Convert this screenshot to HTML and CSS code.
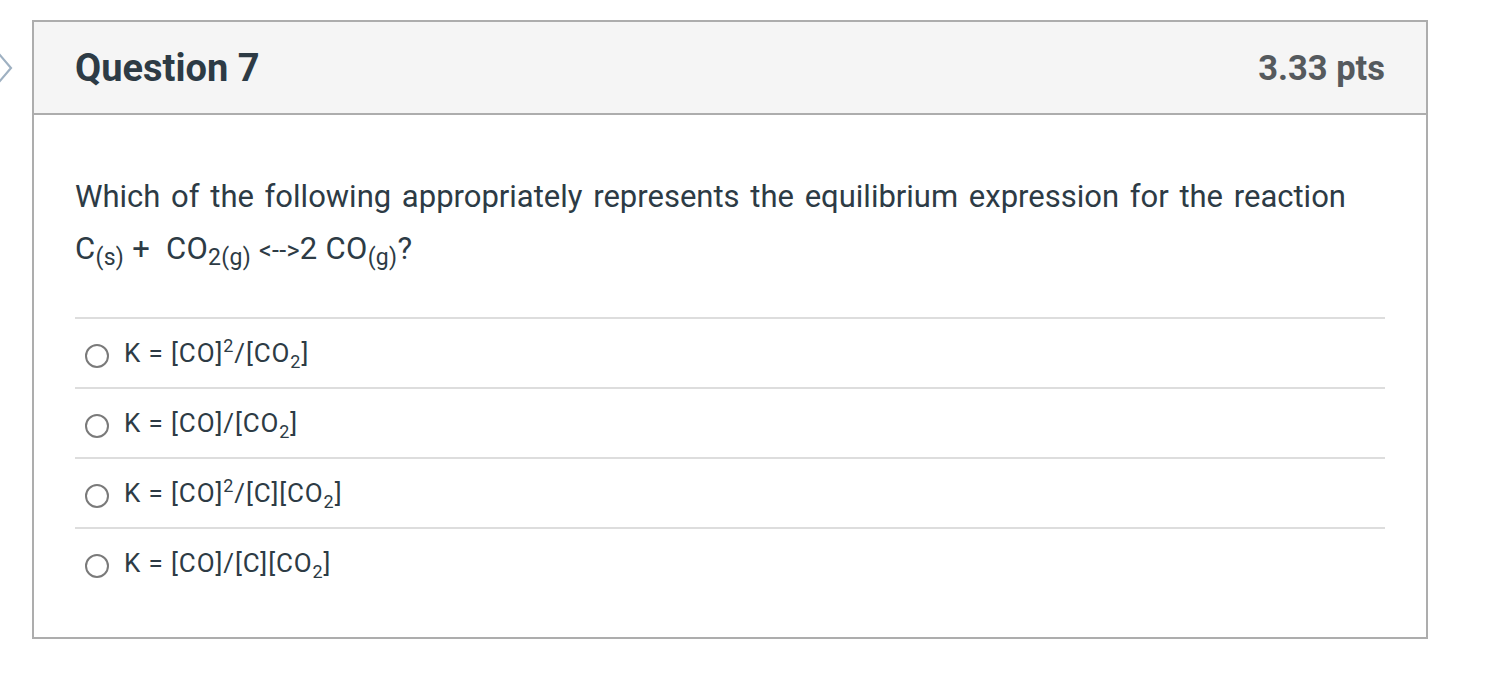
FILE: index.html
```html
<!DOCTYPE html>
<html>
<head>
<meta charset="utf-8">
<link rel="stylesheet" href="styles.css">
</head>
<body>
<div class="page">
  <div class="side">
    <svg class="chev" width="16" height="30" viewBox="0 0 16 30"><path d="M1 1 L13 15 L1 29" fill="none" stroke="#9fb1c2" stroke-width="2.2"/></svg>
  </div>
  <div class="card">
    <div class="head">
      <div class="title">Question 7</div>
      <div class="pts">3.33 pts</div>
    </div>
    <div class="body">
      <div class="qtext">
        <div class="qline">Which of the following appropriately represents the equilibrium expression for the reaction</div>
        <div class="qline eq">C<span class="sub">(s)</span> +&nbsp; CO<span class="sub">2(g)</span> <span class="arrow">&lt;--&gt;</span>2 CO<span class="sub">(g)</span>?</div>
      </div>
      <div class="answers">
        <div class="ans"><span class="radio"></span><span class="atext">K = [CO]<span class="asup">2</span>/[CO<span class="asub">2</span>]</span></div>
        <div class="ans"><span class="radio"></span><span class="atext">K = [CO]/[CO<span class="asub">2</span>]</span></div>
        <div class="ans"><span class="radio"></span><span class="atext">K = [CO]<span class="asup">2</span>/[C][CO<span class="asub">2</span>]</span></div>
        <div class="ans"><span class="radio"></span><span class="atext">K = [CO]/[C][CO<span class="asub">2</span>]</span></div>
      </div>
    </div>
  </div>
</div>
</body>
</html>
```
FILE: styles.css
```css
html, body {
  margin: 0;
  padding: 0;
  background: #ffffff;
}
body {
  font-family: Roboto, "Liberation Sans", sans-serif;
  color: #2d3b45;
}
.page {
  display: flex;
  align-items: flex-start;
  padding-top: 20px;
}
.side {
  width: 32px;
  flex: none;
  padding-top: 33px;
}
.chev {
  display: block;
  margin-left: -2px;
}
.card {
  width: 1392px;
  border: 2px solid #adadad;
  background: #fff;
}
.head {
  background: #f5f5f5;
  border-bottom: 2px solid #adadad;
  height: 91px;
  display: flex;
  align-items: center;
  justify-content: space-between;
  padding: 0 41px;
}
.title {
  font-size: 38px;
  font-weight: 700;
  color: #2d3b45;
}
.pts {
  font-size: 34.5px;
  font-weight: 700;
  color: #555a5e;
}
.body {
  padding: 56px 41px 40px;
}
.qtext {
  font-size: 31px;
  word-spacing: 3px;
  padding-bottom: 42px;
}
.qline {
  height: 52px;
  line-height: 52px;
  white-space: nowrap;
}
.qline.eq {
  word-spacing: 0;
  letter-spacing: 0.3px;
}
.sub {
  font-size: 23px;
  vertical-align: -6px;
  line-height: 0;
}
.arrow {
  font-size: 25px;
}
.ans {
  border-top: 2px solid #dddddd;
  height: 68px;
  display: flex;
  align-items: center;
  padding-left: 10px;
}
.radio {
  width: 24px;
  height: 24px;
  border: 2px solid #7a7a7a;
  border-radius: 50%;
  box-sizing: border-box;
  flex: none;
  margin-right: 15px;
  margin-top: 5px;
}
.atext {
  font-size: 26px;
  letter-spacing: 0.9px;
  line-height: 30px;
  color: #2d3b45;
}
.asup {
  font-size: 18px;
  vertical-align: 10px;
  line-height: 0;
}
.asub {
  font-size: 18px;
  vertical-align: -6px;
  line-height: 0;
}
```
